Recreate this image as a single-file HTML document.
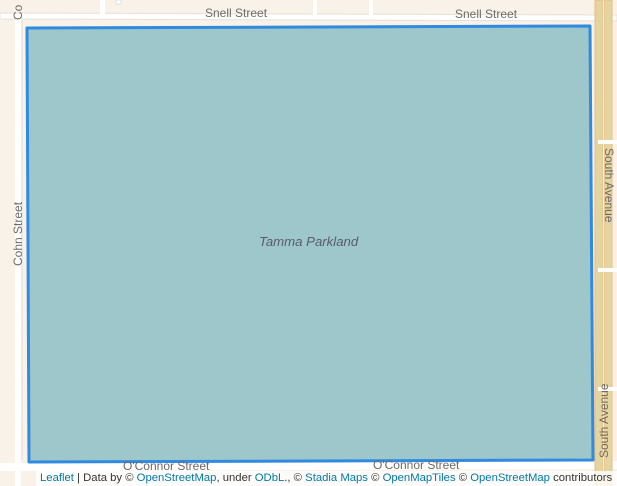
<!DOCTYPE html>
<html><head><style>
body{margin:0;width:617px;height:486px;overflow:hidden;background:#f7f1e8;font-family:"Liberation Sans",sans-serif;position:relative}
.t{position:absolute;color:#6e6a66;font-size:12px;white-space:nowrap}
</style></head><body>
<svg width="617" height="486" style="position:absolute;left:0;top:0">
<rect width="617" height="486" fill="#f8f2e9"/>
<polygon points="0,13 617,15 617,21 0,19" fill="#fff" stroke="#e6e0d8" stroke-width="1"/>
<rect x="100" y="0" width="5" height="16" fill="#fff"/>
<rect x="313" y="0" width="4" height="16" fill="#fff"/>
<rect x="369" y="0" width="4" height="16" fill="#fff"/>
<rect x="116" y="0" width="5" height="4" fill="#fff" stroke="#ccc" stroke-width="0.5"/>
<rect x="15" y="16" width="6" height="470" fill="#fff"/>
<line x1="22" y1="18" x2="22" y2="460" stroke="#e6e0d8"/>
<polygon points="0,463 617,461 617,469 0,471" fill="#fff"/>
<rect x="595" y="0" width="8" height="486" fill="#e2d59e" stroke="#f0b68a" stroke-width="1"/>
<rect x="604" y="0" width="8" height="486" fill="#e2d59e" stroke="#f0b68a" stroke-width="1"/>
<rect x="603" y="0" width="1" height="486" fill="#f8f2e9"/>
<rect x="598" y="140" width="19" height="4" fill="#fff"/>
<rect x="598" y="268" width="19" height="4" fill="#fff"/>
<rect x="598" y="387" width="19" height="4" fill="#fff"/>
<polygon points="27,28 590,26 593,460 29,462" fill="#9dc7cb" stroke="#2f8ae0" stroke-width="3" stroke-linejoin="round"/>
</svg>
<div class="t" style="left:205px;top:6px">Snell Street</div>
<div class="t" style="left:455px;top:7px">Snell Street</div>
<div class="t" style="left:11px;top:0px;transform-origin:0 0;transform:rotate(-90deg) translate(-20px,0)">Co</div>
<div class="t" style="left:11px;top:266px;transform-origin:0 0;transform:rotate(-90deg)">Cohn Street</div>
<div class="t" style="left:123px;top:459px">O'Connor Street</div>
<div class="t" style="left:373px;top:458px">O'Connor Street</div>
<div class="t" style="left:616px;top:148px;transform-origin:0 0;transform:rotate(90deg)">South Avenue</div>
<div class="t" style="left:597px;top:458px;transform-origin:0 0;transform:rotate(-90deg)">South Avenue</div>
<div class="t" style="left:259px;top:234px;font-style:italic;color:#5a5a6a;font-size:13.2px">Tamma Parkland</div>
<div style="position:absolute;left:36px;top:471px;width:581px;height:15px;background:rgba(255,255,255,0.8);font-size:11.3px;line-height:15px;color:#333;padding-left:4px;white-space:nowrap;box-sizing:border-box"><span style="color:#0078a8">Leaflet</span> | Data by © <span style="color:#0078a8">OpenStreetMap</span>, under <span style="color:#0078a8">ODbL</span>., © <span style="color:#0078a8">Stadia Maps</span> © <span style="color:#0078a8">OpenMapTiles</span> © <span style="color:#0078a8">OpenStreetMap</span> contributors</div>
</body></html>
